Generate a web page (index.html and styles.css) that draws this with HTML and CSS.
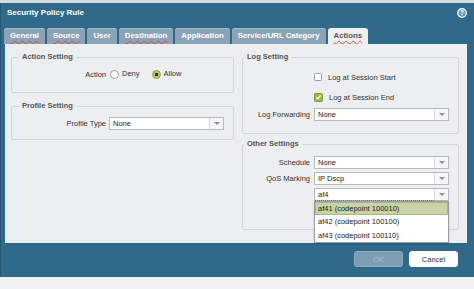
FILE: index.html
```html
<!DOCTYPE html>
<html lang="en">
<head>
  <meta charset="UTF-8">
  <meta name="viewport" content="width=device-width, initial-scale=1">
  <title>Security Policy Rule</title>
  <link rel="stylesheet" href="styles.css">
</head>
<body>

<div class="page-top"></div>

<div class="dialog">
  <div class="titlebar">
    <span class="title">Security Policy Rule</span>
    <svg class="help" width="10" height="10" viewBox="0 0 10 10">
      <circle cx="5" cy="5" r="4.3" fill="#5f9cc6" stroke="#fff" stroke-width="1.2"/>
      <text x="5" y="7.4" text-anchor="middle" font-size="6.5" font-weight="bold" fill="#fff" font-family="Liberation Sans, sans-serif">?</text>
    </svg>
  </div>

  <div class="tabs">
    <div class="tab"><span class="spell">General</span></div>
    <div class="tab"><span class="spell">Source</span></div>
    <div class="tab">User</div>
    <div class="tab"><span class="spell">Destination</span></div>
    <div class="tab">Application</div>
    <div class="tab">Service/URL Category</div>
    <div class="tab active"><span class="spell">Actions</span></div>
  </div>

  <div class="panel">
    <div class="col col-left">
      <fieldset class="group action-group">
        <legend>Action Setting</legend>
        <div class="row">
          <span class="label">Action</span>
          <span class="radio"></span><span class="opt">Deny</span>
          <span class="radio checked"></span><span class="opt">Allow</span>
        </div>
      </fieldset>

      <fieldset class="group profile-group">
        <legend>Profile Setting</legend>
        <div class="row">
          <span class="label">Profile Type</span>
          <div class="select">
            <span class="value">None</span>
            <span class="arrow"></span>
          </div>
        </div>
      </fieldset>
    </div>

    <div class="col col-right">
      <fieldset class="group log-group">
        <legend>Log Setting</legend>
        <div class="row check-row">
          <span class="checkbox"></span><span>Log at Session Start</span>
        </div>
        <div class="row check-row second">
          <span class="checkbox checked">
            <svg width="8" height="8" viewBox="0 0 8 8"><path d="M1.5 4.2 L3.3 6 L6.6 1.8" fill="none" stroke="#fff" stroke-width="1.6"/></svg>
          </span><span>Log at Session End</span>
        </div>
        <div class="row field-row">
          <span class="label">Log Forwarding</span>
          <div class="select">
            <span class="value">None</span>
            <span class="arrow"></span>
          </div>
        </div>
      </fieldset>

      <fieldset class="group other-group">
        <legend>Other Settings</legend>
        <div class="row field-row">
          <span class="label">Schedule</span>
          <div class="select">
            <span class="value">None</span>
            <span class="arrow"></span>
          </div>
        </div>
        <div class="row field-row">
          <span class="label">QoS Marking</span>
          <div class="select">
            <span class="value">IP Dscp</span>
            <span class="arrow"></span>
          </div>
        </div>
        <div class="row field-row">
          <span class="label"></span>
          <div class="combo">
            <div class="select invalid">
              <span class="value">af4</span>
              <span class="arrow"></span>
            </div>
            <ul class="dropdown">
              <li class="hover">af41 (codepoint 100010)</li>
              <li>af42 (codepoint 100100)</li>
              <li>af43 (codepoint 100110)</li>
            </ul>
          </div>
        </div>
      </fieldset>
    </div>
  </div>

  <div class="footer">
    <button class="btn btn-ok" disabled>OK</button>
    <button class="btn btn-cancel">Cancel</button>
  </div>
</div>

</body>
</html>
```

FILE: styles.css
```css
body {
  margin: 0;
  background: #f1f2f4;
  font-family: "Liberation Sans", Arial, sans-serif;
  font-size: 7.5px;
  color: #333;
}
.page-top {
  height: 3px;
  background: #d6dce0;
}
.dialog {
  height: 274px;
  box-sizing: border-box;
  background: #2f6a8a;
  padding: 0 7px 0 5px;
  display: flex;
  flex-direction: column;
  box-shadow: inset 1px 0 0 #24566f, 0 1px 2px rgba(0,0,0,0.25);
}
.titlebar {
  height: 25px;
  box-sizing: border-box;
  padding: 5px 0 0 2px;
  display: flex;
  justify-content: space-between;
  align-items: flex-start;
}
.title {
  color: #fff;
  font-weight: bold;
  font-size: 8px;
  line-height: 10px;
}
.help {
  display: block;
}
.tabs {
  height: 16px;
  display: flex;
  gap: 2px;
  margin-left: -1px;
}
.tab {
  padding: 0 6px;
  line-height: 16px;
  font-size: 7.8px;
  background: #8aa3b6;
  color: #fff;
  font-weight: bold;
  border-radius: 3px 3px 0 0;
  box-shadow: inset 0 1px 0 #a9bccb;
}
.tab.active {
  background: #eceeef;
  color: #5d5353;
  box-shadow: none;
}
.spell {
  text-decoration: underline wavy #d94848;
  text-decoration-thickness: 1px;
  text-underline-offset: 2px;
}
.panel {
  height: 199px;
  box-sizing: border-box;
  background: #eceeef;
  padding: 8px 0 0 6px;
  display: grid;
  grid-template-columns: 223px 217px;
  column-gap: 8px;
  align-content: start;
}
.col {
  display: flex;
  flex-direction: column;
}
.col-left {
  gap: 8px;
}
.col-right {
  gap: 5px;
}
.group {
  margin: 0;
  padding: 0;
  min-width: 0;
  border: 1px solid #d3d5d8;
  border-radius: 2px;
}
.group legend {
  margin-left: 7px;
  padding: 0 3px;
  font-weight: bold;
  color: #555;
  line-height: 10px;
}
.col-right .group legend {
  margin-left: 1px;
}
.row {
  display: flex;
  align-items: center;
  height: 12px;
}
.label {
  width: 97px;
  padding-right: 3px;
  box-sizing: border-box;
  text-align: right;
}
.col-right .label {
  width: 71px;
  padding-right: 4px;
}
.action-group {
  padding: 6px 0 12px;
}
.profile-group {
  padding: 6px 0 9px;
}
.profile-group .row,
.field-row {
  height: 13px;
}
.radio {
  width: 9px;
  height: 9px;
  box-sizing: border-box;
  border: 1px solid #9a9ea2;
  border-radius: 50%;
  background: #fff;
  margin: 0 3px 0 1px;
}
.radio.checked {
  margin-left: 12px;
  border-color: #87a03c;
  background: radial-gradient(circle, #2f3a1a 0 1.5px, #b3cb62 2px);
}
.opt {
  line-height: 12px;
}
.log-group {
  padding: 9px 0 12px;
}
.check-row {
  padding-left: 71px;
}
.check-row.second {
  margin-top: 8px;
}
.log-group .field-row {
  margin-top: 5px;
}
.checkbox {
  width: 8px;
  height: 8px;
  box-sizing: border-box;
  border: 1px solid #9a9ea2;
  border-radius: 1.5px;
  background: #fff;
  margin-right: 6px;
  display: flex;
  align-items: center;
  justify-content: center;
}
.checkbox.checked {
  width: 9px;
  height: 9px;
  border-color: #7f9c2e;
  background: #9dbc3e;
}
.other-group {
  padding: 7px 0 28px;
}
.other-group .field-row + .field-row {
  margin-top: 3px;
}
.select {
  display: flex;
  width: 115px;
  height: 13px;
  box-sizing: border-box;
  border: 1px solid #b7bbbf;
  background: #fff;
}
.col-right .select {
  width: 135px;
}
.select .value {
  flex: 1;
  padding-left: 3px;
  line-height: 11px;
  color: #222;
}
.select.invalid .value {
  border-bottom: 1px dotted #e04a4a;
  margin-bottom: -1px;
}
.arrow {
  width: 13px;
  border-left: 1px solid #d6d8da;
  background: #f6f6f6;
  display: flex;
  align-items: center;
  justify-content: center;
}
.arrow::after {
  content: "";
  border-left: 3px solid transparent;
  border-right: 3px solid transparent;
  border-top: 3px solid #8c8f92;
}
.combo {
  position: relative;
}
.dropdown {
  position: absolute;
  top: 100%;
  left: 0;
  width: 135px;
  box-sizing: border-box;
  margin: 0;
  padding: 0;
  list-style: none;
  background: #fff;
  border: 1px solid #9b9fa3;
  box-shadow: 0 1px 2px rgba(0,0,0,0.2);
  z-index: 2;
}
.dropdown li {
  height: 13.4px;
  line-height: 13px;
  padding-left: 3px;
  color: #222;
}
.dropdown li.hover {
  background: #c8d3a6;
  box-shadow: inset 0 0 0 1px #a7b582;
}
.footer {
  height: 34px;
  box-sizing: border-box;
  padding: 8px 9px 0 0;
  display: flex;
  justify-content: flex-end;
  align-items: flex-start;
  gap: 6px;
}
.btn {
  width: 49px;
  height: 16px;
  padding: 0;
  border-radius: 3px;
  font-family: inherit;
  font-size: 7.5px;
}
.btn-ok {
  background: #7c9db2;
  border: 1px solid #8eabbd;
  color: #a9c0ce;
}
.btn-cancel {
  background: #fff;
  border: 1px solid #fff;
  color: #333;
  cursor: pointer;
}
```
